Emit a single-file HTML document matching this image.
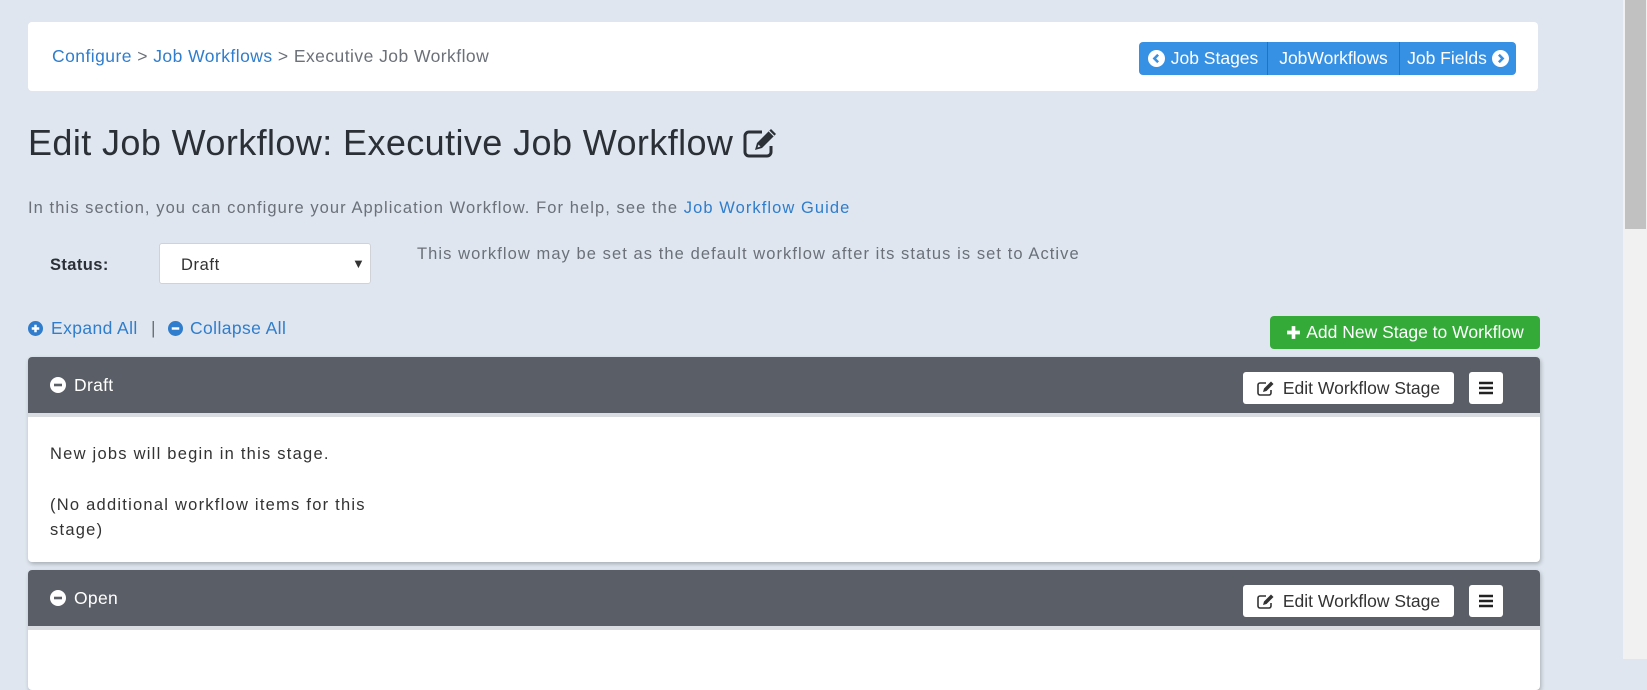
<!DOCTYPE html>
<html><head><meta charset="utf-8">
<style>
*{box-sizing:border-box;margin:0;padding:0}
html,body{width:1647px;height:659px;overflow:hidden;background:#dfe6ef;font-family:"Liberation Sans",Arial,sans-serif;color:#333}
.a{position:absolute;white-space:nowrap}
.card{position:absolute;left:28px;top:22px;width:1510px;height:69px;background:#fff;border-radius:4px}
.blue{color:#2f7dcc}
.nav{position:absolute;left:1139px;top:42px;height:33px;width:377px;background:#3690e3;border-radius:4px;display:flex;color:#fff;font-size:17.5px}
.nav div{display:flex;align-items:center;justify-content:center;height:100%;border-left:1px solid #2670bd}
.nav div:first-child{border-left:none}
.panel{position:absolute;left:28px;width:1512px;background:#fff;border-radius:4px;box-shadow:1px 2px 4px rgba(0,0,0,.25)}
.ph{height:60px;background:#5a5e66;border-radius:4px 4px 0 0;border-bottom:4px solid #d9dce0;position:relative}
.ph .t{position:absolute;left:22px;top:0;height:56px;display:flex;align-items:center;color:#fff;font-size:17.5px;letter-spacing:0.3px}
.eb{position:absolute;left:1215px;top:15px;width:211px;height:32px;background:#fff;border-radius:3px;display:flex;align-items:center;justify-content:center;font-size:17.5px;color:#333;gap:8px}
.hb{position:absolute;left:1441px;top:15px;width:34px;height:32px;background:#fff;border-radius:3px;display:flex;align-items:center;justify-content:center}
.bt{font-size:16.5px;color:#333;letter-spacing:1.24px}
</style></head><body>
<div class="card"></div>
<div class="a" style="left:52px;top:46px;font-size:17.5px;color:#6b7079;letter-spacing:0.45px"><span class="blue">Configure</span> &gt; <span class="blue">Job Workflows</span> &gt; Executive Job Workflow</div>
<div class="nav">
 <div style="width:128px;gap:6px"><svg width="17" height="17" viewBox="0 0 16 16"><circle cx="8" cy="8" r="8" fill="#fff"/><path d="M9.5 4.5L6 8l3.5 3.5" stroke="#3690e3" stroke-width="2.4" fill="none"/></svg>Job Stages</div>
 <div style="width:132px">JobWorkflows</div>
 <div style="width:117px;gap:5px">Job Fields<svg width="17" height="17" viewBox="0 0 16 16"><circle cx="8" cy="8" r="8" fill="#fff"/><path d="M6.5 4.5L10 8l-3.5 3.5" stroke="#3690e3" stroke-width="2.4" fill="none"/></svg></div>
</div>
<div class="a" style="left:28px;top:122px;font-size:36px;color:#2b2f36;letter-spacing:0.4px">Edit Job Workflow: Executive Job Workflow</div>
<svg class="a" style="left:742px;top:126px" width="38" height="32" viewBox="0 0 38 32"><path d="M20 6H7a4 4 0 0 0-4 4v16a4 4 0 0 0 4 4h18a4 4 0 0 0 4-4v-6" fill="none" stroke="#2b2f36" stroke-width="3"/><path d="M13 24l2-7L29 3l5 5-14 14z" fill="#2b2f36"/><path d="M15.5 21.5l1-3 2 2z" fill="#dfe6ef"/><path d="M27 5l5 5" stroke="#dfe6ef" stroke-width="1.2"/></svg>
<div class="a" style="left:28px;top:199px;font-size:16.5px;color:#6b7079;letter-spacing:1.07px">In this section, you can configure your Application Workflow. For help, see the <span class="blue">Job Workflow Guide</span></div>
<div class="a" style="left:50px;top:256px;font-size:16.5px;font-weight:bold;color:#2b2f36;letter-spacing:0.4px">Status:</div>
<div class="a" style="left:159px;top:243px;width:212px;height:41px;background:#fff;border:1px solid #cfd3d8;border-radius:3px"></div>
<div class="a" style="left:181px;top:256px;font-size:16.5px;color:#333;letter-spacing:0.6px">Draft</div>
<div class="a" style="left:352px;top:256px;font-size:13px;color:#333">▼</div>
<div class="a" style="left:417px;top:245px;font-size:16.5px;color:#6b7079;letter-spacing:1.07px">This workflow may be set as the default workflow after its status is set to Active</div>
<svg class="a" style="left:28px;top:321px" width="15" height="15" viewBox="0 0 16 16"><circle cx="8" cy="8" r="8" fill="#2f7dcc"/><path d="M8 4v8M4 8h8" stroke="#fff" stroke-width="2.6"/></svg>
<div class="a blue" style="left:51px;top:318px;font-size:17.5px;letter-spacing:0.4px">Expand All</div>
<div class="a" style="left:151px;top:318px;font-size:17.5px;color:#6b7079">|</div>
<svg class="a" style="left:168px;top:321px" width="15" height="15" viewBox="0 0 16 16"><circle cx="8" cy="8" r="8" fill="#2f7dcc"/><path d="M4 8h8" stroke="#fff" stroke-width="2.6"/></svg>
<div class="a blue" style="left:190px;top:318px;font-size:17.5px;letter-spacing:0.4px">Collapse All</div>
<div class="a" style="left:1270px;top:316px;width:270px;height:33px;background:#34aa38;border-radius:4px;color:#fff;font-size:17.5px;display:flex;align-items:center;justify-content:center;gap:5px"><svg width="15" height="15" viewBox="0 0 14 14"><path d="M7 1v12M1 7h12" stroke="#fff" stroke-width="3.4"/></svg>Add New Stage to Workflow</div>

<div class="panel" style="top:357px;height:205px">
 <div class="ph"><div class="t"><svg width="16" height="16" viewBox="0 0 16 16" style="margin-right:8px"><circle cx="8" cy="8" r="8" fill="#fff"/><path d="M4 8h8" stroke="#5a5e66" stroke-width="2.6"/></svg>Draft</div>
 <div class="eb"><svg width="18" height="16" viewBox="0 0 18 16"><path d="M9 3H3a2 2 0 0 0-2 2v8a2 2 0 0 0 2 2h9a2 2 0 0 0 2-2v-3" fill="none" stroke="#333" stroke-width="1.6"/><path d="M6 12l1-3.5 7-7 2.5 2.5-7 7z" fill="#333"/></svg>Edit Workflow Stage</div>
 <div class="hb"><svg width="16" height="14" viewBox="0 0 16 14"><path d="M1 2h14M1 7h14M1 12h14" stroke="#222" stroke-width="2.6"/></svg></div></div>
 <div class="a bt" style="left:22px;top:88px">New jobs will begin in this stage.</div>
 <div class="a bt" style="left:22px;top:136px;line-height:25px">(No additional workflow items for this<br>stage)</div>
</div>
<div class="panel" style="top:570px;height:120px">
 <div class="ph"><div class="t"><svg width="16" height="16" viewBox="0 0 16 16" style="margin-right:8px"><circle cx="8" cy="8" r="8" fill="#fff"/><path d="M4 8h8" stroke="#5a5e66" stroke-width="2.6"/></svg>Open</div>
 <div class="eb"><svg width="18" height="16" viewBox="0 0 18 16"><path d="M9 3H3a2 2 0 0 0-2 2v8a2 2 0 0 0 2 2h9a2 2 0 0 0 2-2v-3" fill="none" stroke="#333" stroke-width="1.6"/><path d="M6 12l1-3.5 7-7 2.5 2.5-7 7z" fill="#333"/></svg>Edit Workflow Stage</div>
 <div class="hb"><svg width="16" height="14" viewBox="0 0 16 14"><path d="M1 2h14M1 7h14M1 12h14" stroke="#222" stroke-width="2.6"/></svg></div></div>
</div>
<div class="a" style="left:1623px;top:0;width:24px;height:659px;background:#f1f1f1"></div>
<div class="a" style="left:1625px;top:0;width:21px;height:229px;background:#c1c1c1"></div>
</body></html>
